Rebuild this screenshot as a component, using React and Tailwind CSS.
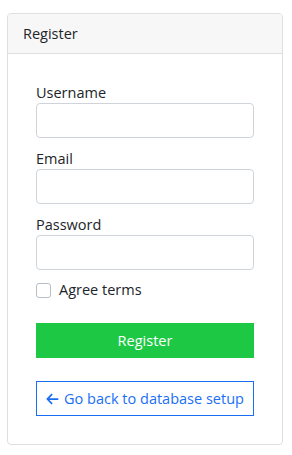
const Field = ({ label, type }) => (
    <div className="mb-[10px]">
        <label className="block text-[14.5px] leading-[21px] text-[#212529]">{label}</label>
        <input type={type} className="block w-full h-[35px] rounded-[4px] border border-[#ced4da] bg-white px-3 outline-none" />
    </div>
);

const App = () => {
    return (
        <div className="w-[292px] h-[455px] bg-white pt-[13px] px-[7px]" style={{ fontFamily: '"Open Sans", "Noto Sans", sans-serif' }}>
            <div className="w-[276px] border border-[#dfdfdf] rounded-[4px] overflow-hidden">
                <div className="h-[40px] bg-[#f7f7f7] border-b border-[#dfdfdf] px-[15px] flex items-center text-[14.5px] text-[#212529]">
                    Register
                </div>
                <div className="px-[28px] pt-[28px] pb-[28px]">
                    <Field label="Username" type="text" />
                    <Field label="Email" type="email" />
                    <Field label="Password" type="password" />
                    <label className="flex items-center h-[20px] gap-[8px] text-[14.5px] text-[#212529]">
                        <span className="w-[15px] h-[15px] rounded-[3px] border border-[#b8bec5] bg-white"></span>
                        Agree terms
                    </label>
                    <button className="mt-[23px] w-full h-[35px] bg-[#1dc944] text-white text-[14.5px]">Register</button>
                    <button className="mt-[23px] w-full h-[35px] border border-[#1a6ef5] bg-white text-[#1a6ef5] text-[14.5px] flex items-center justify-center gap-[5px]">
                        <svg viewBox="0 0 448 512" className="w-[13px] h-[14px]" fill="currentColor">
                            <path d="M9.4 233.4c-12.5 12.5-12.5 32.8 0 45.3l160 160c12.5 12.5 32.8 12.5 45.3 0s12.5-32.8 0-45.3L109.2 288 416 288c17.7 0 32-14.3 32-32s-14.3-32-32-32l-306.7 0L214.6 118.6c12.5-12.5 12.5-32.8 0-45.3s-32.8-12.5-45.3 0l-160 160z" />
                        </svg>
                        Go back to database setup
                    </button>
                </div>
            </div>
        </div>
    );
};

export default App;
